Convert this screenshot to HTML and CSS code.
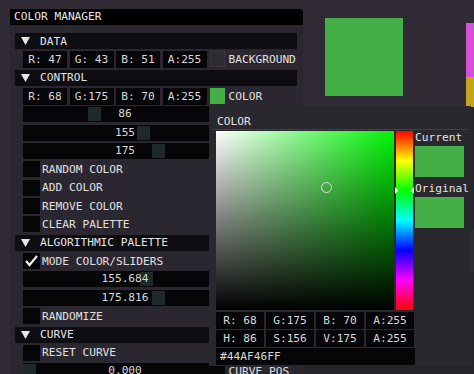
FILE: index.html
```html
<!DOCTYPE html>
<html lang="en">

<head>
  <meta charset="UTF-8">
  <title>color manager</title>
  <link rel="stylesheet" href="styles.css">
</head>

<body>
  <div class="stage">
    <div class="backdrop"></div>
    <div class="scroll"></div>
    <div class="stripe">
      <span class="stripe-a"></span>
      <span class="stripe-b"></span>
    </div>
    <div class="big-swatch"></div>

    <div class="window">
      <div class="title">COLOR MANAGER</div>
      <div class="body">
        <div class="header">
          <svg class="arrow" width="9" height="8" viewBox="0 0 9 8"><path d="M0 0H9L4.5 8Z" fill="#e6e6e6"/></svg>
          <span>DATA</span>
        </div>
        <div class="row">
          <span class="field">R: 47</span>
          <span class="field">G: 43</span>
          <span class="field">B: 51</span>
          <span class="field wide">A:255</span>
          <span class="swatch dark"></span>
          <span class="label">BACKGROUND</span>
        </div>

        <div class="header">
          <svg class="arrow" width="9" height="8" viewBox="0 0 9 8"><path d="M0 0H9L4.5 8Z" fill="#e6e6e6"/></svg>
          <span>CONTROL</span>
        </div>
        <div class="row">
          <span class="field">R: 68</span>
          <span class="field">G:175</span>
          <span class="field">B: 70</span>
          <span class="field wide">A:255</span>
          <span class="swatch green"></span>
          <span class="label">COLOR</span>
        </div>
        <div class="row">
          <div class="slider"><span class="grab" style="left:65px"></span><span class="val">86</span></div>
        </div>
        <div class="row">
          <div class="slider"><span class="grab" style="left:114px"></span><span class="val">155</span></div>
        </div>
        <div class="row">
          <div class="slider"><span class="grab" style="left:129px"></span><span class="val">175</span></div>
        </div>
        <div class="row"><span class="btn"></span><span class="btn-label">RANDOM COLOR</span></div>
        <div class="row"><span class="btn"></span><span class="btn-label">ADD COLOR</span></div>
        <div class="row"><span class="btn"></span><span class="btn-label">REMOVE COLOR</span></div>
        <div class="row"><span class="btn"></span><span class="btn-label">CLEAR PALETTE</span></div>

        <div class="header">
          <svg class="arrow" width="9" height="8" viewBox="0 0 9 8"><path d="M0 0H9L4.5 8Z" fill="#e6e6e6"/></svg>
          <span>ALGORITHMIC PALETTE</span>
        </div>
        <div class="row">
          <span class="btn">
            <svg width="17" height="16" viewBox="0 0 17 16"><polyline points="3,8 6.5,12 14,3" fill="none" stroke="#f0f0f0" stroke-width="2.2"/></svg>
          </span>
          <span class="btn-label">MODE COLOR/SLIDERS</span>
        </div>
        <div class="row">
          <div class="slider"><span class="grab" style="left:117px"></span><span class="val">155.684</span></div>
        </div>
        <div class="row">
          <div class="slider"><span class="grab" style="left:129px"></span><span class="val">175.816</span></div>
        </div>
        <div class="row"><span class="btn"></span><span class="btn-label">RANDOMIZE</span></div>

        <div class="header">
          <svg class="arrow" width="9" height="8" viewBox="0 0 9 8"><path d="M0 0H9L4.5 8Z" fill="#e6e6e6"/></svg>
          <span>CURVE</span>
        </div>
        <div class="row"><span class="btn"></span><span class="btn-label">RESET CURVE</span></div>
        <div class="row">
          <div class="slider"><span class="grab" style="left:0px"></span><span class="val">0.000</span></div>
          <span class="label">CURVE POS</span>
        </div>
      </div>
    </div>

    <!-- popup del color picker -->
    <div class="picker">
      <div class="picker-title">COLOR</div>
      <div class="sep"></div>
      <div class="pick-main">
        <div class="sv">
          <span class="marker"></span>
        </div>
        <div class="hue">
          <svg class="hue-arrows" width="19" height="7" viewBox="0 0 19 7">
            <path d="M0 0L3.5 3.5L0 7Z" fill="#f0f0f0"/>
            <path d="M19 0L15.5 3.5L19 7Z" fill="#f0f0f0"/>
          </svg>
        </div>
        <div class="side">
          <div class="side-label">Current</div>
          <div class="side-swatch"></div>
          <div class="side-label">Original</div>
          <div class="side-swatch"></div>
        </div>
      </div>
      <div class="pick-rows">
        <div class="pick-row">
          <span class="pfield">R: 68</span>
          <span class="pfield">G:175</span>
          <span class="pfield">B: 70</span>
          <span class="pfield">A:255</span>
        </div>
        <div class="pick-row">
          <span class="pfield">H: 86</span>
          <span class="pfield">S:156</span>
          <span class="pfield">V:175</span>
          <span class="pfield">A:255</span>
        </div>
        <div class="pick-row hex">#44AF46FF</div>
      </div>
    </div>
  </div>
</body>

</html>
```

FILE: styles.css
```css
* {
  box-sizing: border-box;
}

body {
  margin: 0;
  background: #2f2a34;
  font-family: "DejaVu Sans Mono", "Liberation Mono", monospace;
  font-size: 11.2px;
  color: #d8d8d8;
}

.stage {
  position: relative;
  width: 474px;
  height: 374px;
  overflow: hidden;
}

/* ventanas de fondo */
.backdrop {
  position: absolute;
  left: 300px;
  top: 107px;
  right: 0;
  bottom: 0;
  background: #25242a;
}

.scroll {
  position: absolute;
  left: 465px;
  top: 230px;
  width: 9px;
  height: 42px;
  background: #2e2d33;
}

.stripe {
  position: absolute;
  left: 466px;
  top: 23px;
  width: 8px;
  display: flex;
  flex-direction: column;
}

.stripe-a {
  height: 54px;
  background: #d651d6;
}

.stripe-b {
  height: 30px;
  background: #c2a41d;
}

.big-swatch {
  position: absolute;
  left: 325px;
  top: 18px;
  width: 78px;
  height: 78px;
  background: #44af46;
}

/* ventana principal */
.window {
  position: absolute;
  left: 10px;
  top: 9px;
  width: 293px;
  bottom: 0;
  background: #2a2730;
}

.title {
  height: 16px;
  line-height: 16px;
  padding-left: 4px;
  background: #000;
  color: #e8e8e8;
  border-radius: 0 3px 0 0;
}

.body {
  padding: 8px 0 0 5px;
  display: flex;
  flex-direction: column;
  gap: 2.35px;
}

.header {
  width: 282px;
  height: 16px;
  background: #0e0d12;
  display: flex;
  align-items: center;
  gap: 10px;
  padding-left: 6px;
  color: #e4e4e4;
}

.row {
  margin-left: 8px;
  height: 16px;
  display: flex;
  align-items: center;
  gap: 2.5px;
  white-space: nowrap;
}

.field {
  width: 44px;
  height: 17px;
  line-height: 17px;
  background: #060508;
  text-align: center;
}

.swatch {
  width: 15px;
  height: 16px;
  margin-left: 1px;
}

.swatch.dark {
  background: #2f2b33;
  border: 1px solid #3a3640;
}

.swatch.green {
  background: #44af46;
}

.label {
  margin-left: 1px;
  color: #e0e0e0;
}

.slider {
  position: relative;
  width: 202px;
  height: 16px;
  background: #060508;
  text-align: center;
  line-height: 16px;
  flex-shrink: 0;
}

.grab {
  position: absolute;
  top: 1px;
  width: 13px;
  height: 14px;
  background: #1d2a2c;
}

.val {
  position: relative;
  padding-left: 2px;
}

.btn {
  width: 17px;
  height: 16px;
  background: #060508;
  display: flex;
}

.btn-label {
  margin-left: -0.5px;
  color: #e0e0e0;
}

/* popup */
.picker {
  position: absolute;
  left: 209px;
  top: 106px;
  width: 262px;
  height: 260px;
  background: #29282e;
  padding: 8px 7px 0 7px;
}

.picker-title {
  height: 15px;
  line-height: 15px;
  padding-left: 1px;
  color: #e4e4e4;
}

.sep {
  height: 1px;
  background: #403f47;
  margin: 0 -3px 1px -3px;
}

.pick-main {
  display: flex;
  gap: 2px;
  height: 179px;
}

.sv {
  position: relative;
  width: 180px;
  height: 179px;
  background:
    linear-gradient(to top, #000, rgba(0, 0, 0, 0)),
    linear-gradient(to right, #fff, hsl(121, 100%, 48%));
}

.marker {
  position: absolute;
  left: 105px;
  top: 51px;
  width: 11px;
  height: 11px;
  border: 1px solid #dcdcdc;
  border-radius: 50%;
}

.hue {
  position: relative;
  width: 17px;
  height: 179px;
  background: linear-gradient(to bottom, #f00, #ff0 16.6%, #0f0 33.3%, #0ff 50%, #00f 66.6%, #f0f 83.3%, #f00);
}

.hue-arrows {
  position: absolute;
  left: -1px;
  top: 56px;
}

.side {
  width: 49px;
  display: flex;
  flex-direction: column;
}

.side-label {
  height: 15px;
  line-height: 13px;
  color: #e4e4e4;
  white-space: nowrap;
}

.side-swatch {
  height: 31px;
  background: #44af46;
  margin-bottom: 5px;
}

.pick-rows {
  margin-top: 2px;
  display: flex;
  flex-direction: column;
  gap: 1px;
}

.pick-row {
  display: flex;
  gap: 2px;
  height: 17px;
}

.pfield {
  width: 48px;
  height: 17px;
  line-height: 17px;
  background: #060508;
  text-align: center;
}

.pick-row.hex {
  width: 199px;
  background: #060508;
  line-height: 17px;
  padding-left: 4px;
}
```
